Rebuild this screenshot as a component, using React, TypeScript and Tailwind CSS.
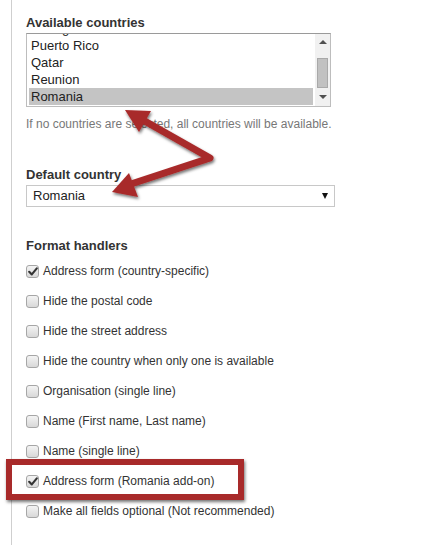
import React from "react";

const options = ["Portugal", "Puerto Rico", "Qatar", "Reunion", "Romania"];

const handlers: { label: string; checked: boolean }[] = [
  { label: "Address form (country-specific)", checked: true },
  { label: "Hide the postal code", checked: false },
  { label: "Hide the street address", checked: false },
  { label: "Hide the country when only one is available", checked: false },
  { label: "Organisation (single line)", checked: false },
  { label: "Name (First name, Last name)", checked: false },
  { label: "Name (single line)", checked: false },
  { label: "Address form (Romania add-on)", checked: true },
  { label: "Make all fields optional (Not recommended)", checked: false },
];

function Checkbox({ checked }: { checked: boolean }) {
  return (
    <span className="relative w-[13px] h-[13px] shrink-0 rounded-[3px] border border-[#a6a6a6] bg-gradient-to-b from-[#f4f4f4] to-[#d8d8d8] flex items-center justify-center">
      {checked && (
        <svg width="10" height="9" viewBox="0 0 10 9">
          <path d="M1.2 4.8 L3.8 7.4 L8.8 1.4" fill="none" stroke="#333" strokeWidth="2.1" strokeLinecap="round" strokeLinejoin="round" />
        </svg>
      )}
    </span>
  );
}

export default function App() {
  return (
    <div className="relative w-[421px] h-[545px] overflow-hidden bg-white text-[#333] font-['Liberation_Sans',Arial,sans-serif]">
      <div className="ml-[11px] h-full border-l border-[#cfcfcf] pl-[14px] pt-[15px]">
        <div className="text-[13px] leading-[15px] font-bold">Available countries</div>
        <div className="mt-[3px] w-[305px] h-[74px] border border-[#bdbdbd] border-t-[#9a9a9a] flex">
          <div className="flex-1 overflow-hidden px-[2px]">
            <div className="-mt-[14px]">
              {options.map((o) => (
                <div
                  key={o}
                  className={`h-[17px] leading-[17px] text-[13px] pl-[2px] text-[#222] ${o === "Romania" ? "bg-[#c4c4c4]" : ""}`}
                >
                  {o}
                </div>
              ))}
            </div>
          </div>
          <div className="w-[15px] bg-[#f1f1f1] flex flex-col items-center">
            <div className="h-[16px] flex items-center justify-center">
              <span className="w-0 h-0 border-l-[4px] border-r-[4px] border-b-[4px] border-l-transparent border-r-transparent border-b-[#505050]" />
            </div>
            <div className="mt-[8px] w-[11px] h-[30px] bg-[#c1c1c1] border border-[#a9a9a9]" />
            <div className="flex-1 flex items-center justify-center">
              <span className="w-0 h-0 border-l-[4px] border-r-[4px] border-t-[4px] border-l-transparent border-r-transparent border-t-[#505050]" />
            </div>
          </div>
        </div>
        <div className="mt-[10px] text-[12px] leading-[14px] text-[#777]">
          If no countries are selected, all countries will be available.
        </div>

        <div className="mt-[36px] text-[13px] leading-[15px] font-bold">Default country</div>
        <div className="mt-[3px] w-[309px] h-[22px] border border-[#c8c8c8] flex items-center pl-[6px] pr-[6px]">
          <span className="flex-1 text-[13px] text-[#222]">Romania</span>
          <span className="w-0 h-0 border-l-[3px] border-r-[3px] border-t-[6px] border-l-transparent border-r-transparent border-t-[#111]" />
        </div>

        <div className="mt-[31px] text-[13px] leading-[15px] font-bold">Format handlers</div>
        <div className="mt-[3px] flex flex-col">
          {handlers.map((h) => (
            <div key={h.label} className="h-[30px] flex items-center">
              <Checkbox checked={h.checked} />
              <span className="ml-[4px] text-[12px] leading-[14px]">{h.label}</span>
            </div>
          ))}
        </div>
      </div>

      {/* annotation rectangle */}
      <div className="absolute left-[6px] top-[459px] w-[238px] h-[41px] border-[6px] border-[#a82a2a] shadow-[1px_2px_3px_rgba(0,0,0,0.55)]" />

      {/* annotation arrows */}
      <svg className="absolute left-0 top-0" width="421" height="545" viewBox="0 0 421 545">
        <defs>
          <filter id="sh" x="-20%" y="-20%" width="140%" height="140%">
            <feDropShadow dx="1" dy="2" stdDeviation="1.5" floodColor="#000" floodOpacity="0.55" />
          </filter>
        </defs>
        <g filter="url(#sh)" fill="#a82a2a">
          <polyline
            points="142,119.5 210,158 131,184"
            fill="none"
            stroke="#a82a2a"
            strokeWidth="7"
            strokeLinejoin="round"
          />
          <polygon points="125,110 151,111 139,132" />
          <polygon points="112,192 129,173 138,197" />
        </g>
      </svg>
    </div>
  );
}
